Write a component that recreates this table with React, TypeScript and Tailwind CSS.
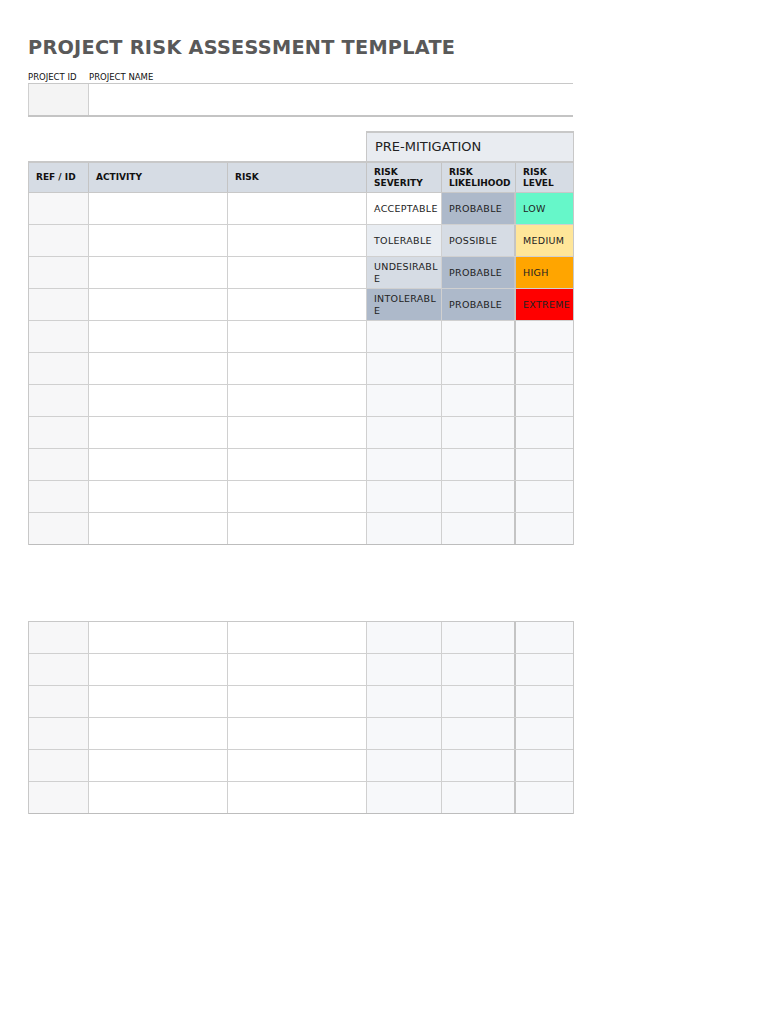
import React from "react";

const COLS = [60, 139, 139, 75, 74, 57];

type Cell = { text?: string; bg: string };

const filled: Cell[][] = [
    [{ text: "ACCEPTABLE", bg: "bg-white" }, { text: "PROBABLE", bg: "bg-[#adb9ca]" }, { text: "LOW", bg: "bg-[#66f7c9]" }],
    [{ text: "TOLERABLE", bg: "bg-[#e9edf2]" }, { text: "POSSIBLE", bg: "bg-[#d6dce4]" }, { text: "MEDIUM", bg: "bg-[#ffe699]" }],
    [{ text: "UNDESIRABLE", bg: "bg-[#d6dce4]" }, { text: "PROBABLE", bg: "bg-[#adb9ca]" }, { text: "HIGH", bg: "bg-[#ffa500]" }],
    [{ text: "INTOLERABLE", bg: "bg-[#adb9ca]" }, { text: "PROBABLE", bg: "bg-[#adb9ca]" }, { text: "EXTREME", bg: "bg-[#ff0000]" }],
];

const emptyPre: Cell[] = [
    { bg: "bg-[#f7f8fa]" },
    { bg: "bg-[#f7f8fa]" },
    { bg: "bg-[#f7f8fa]" },
];

const Row = ({ pre, last }: { pre: Cell[]; last?: boolean }) => (
    <div className={`flex h-[32px] border-b ${last ? "border-[#bdbdbd]" : "border-[#d0d0d0]"}`}>
        <div className="w-[60px] shrink-0 bg-[#f7f7f8] border-r border-[#d0d0d0]" />
        <div className="w-[139px] shrink-0 bg-white border-r border-[#d0d0d0]" />
        <div className="w-[139px] shrink-0 bg-white border-r border-[#d0d0d0]" />
        {pre.map((c, i) => (
            <div
                key={i}
                style={{ width: COLS[3 + i] }}
                className={`${c.bg} shrink-0 ${i === 1 ? "border-r-2 border-[#c4c4c4]" : i === 0 ? "border-r border-[#d0d0d0]" : ""} flex items-center pl-[7px] pr-[1px] text-[9.5px] tracking-[0.3px] leading-[12px] text-[#222] break-all`}
            >
                {c.text}
            </div>
        ))}
    </div>
);

const App: React.FC = () => {
    const extra = Array.from({ length: 7 });
    const second = Array.from({ length: 6 });

    return (
        <div className="w-[768px] h-[1024px] bg-white font-['DejaVu_Sans',sans-serif] pl-[28px] pt-[37px]">
            <h1 className="text-[19.3px] font-bold text-[#595959] leading-[22px] tracking-[0.25px]">
                PROJECT RISK ASSESSMENT TEMPLATE
            </h1>

            {/* project id / name */}
            <div className="mt-[11px] w-[545px]">
                <div className="flex text-[8.5px] leading-[12px] text-[#111] h-[13px] pt-px">
                    <div className="w-[60px]">PROJECT ID</div>
                    <div className="pl-px">PROJECT NAME</div>
                </div>
                <div className="flex h-[34px] border-t border-[#c8c8c8] border-b-2 border-b-[#c4c4c4]">
                    <div className="w-[61px] bg-[#f4f4f4] border-l border-r border-[#d0d0d0]" />
                    <div className="flex-1 bg-white" />
                </div>
            </div>

            {/* main table */}
            <div className="mt-[14px] w-[546px]">
                <div className="flex h-[30px]">
                    <div className="w-[338px]" />
                    <div className="w-[208px] bg-[#e9ecf1] border-t-2 border-l border-r border-[#c8c8c8] flex items-center pl-[8px] text-[13px] text-[#222]">
                        PRE-MITIGATION
                    </div>
                </div>
                <div className="border-l border-r border-[#c8c8c8]">
                    <div className="flex h-[32px] bg-[#d6dce4] border-t-2 border-b border-[#c8c8c8] text-[9px] font-bold leading-[11px] text-[#111]">
                        <div className="w-[60px] shrink-0 border-r border-[#c4c4c4] flex items-center pl-[7px]">REF / ID</div>
                        <div className="w-[139px] shrink-0 border-r border-[#c4c4c4] flex items-center pl-[7px]">ACTIVITY</div>
                        <div className="w-[139px] shrink-0 border-r border-[#c4c4c4] flex items-center pl-[7px]">RISK</div>
                        <div className="w-[75px] shrink-0 border-r border-[#c4c4c4] flex items-center pl-[7px]">RISK<br />SEVERITY</div>
                        <div className="w-[74px] shrink-0 border-r border-[#c4c4c4] flex items-center pl-[7px]">RISK<br />LIKELIHOOD</div>
                        <div className="w-[57px] shrink-0 flex items-center pl-[7px]">RISK<br />LEVEL</div>
                    </div>
                    {filled.map((r, i) => (
                        <Row key={i} pre={r} />
                    ))}
                    {extra.map((_, i) => (
                        <Row key={i} pre={emptyPre} last={i === extra.length - 1} />
                    ))}
                </div>
            </div>

            {/* second table */}
            <div className="mt-[76px] w-[546px] border-l border-r border-t border-[#c8c8c8]">
                {second.map((_, i) => (
                    <Row key={i} pre={emptyPre} last={i === second.length - 1} />
                ))}
            </div>
        </div>
    );
};

export default App;
